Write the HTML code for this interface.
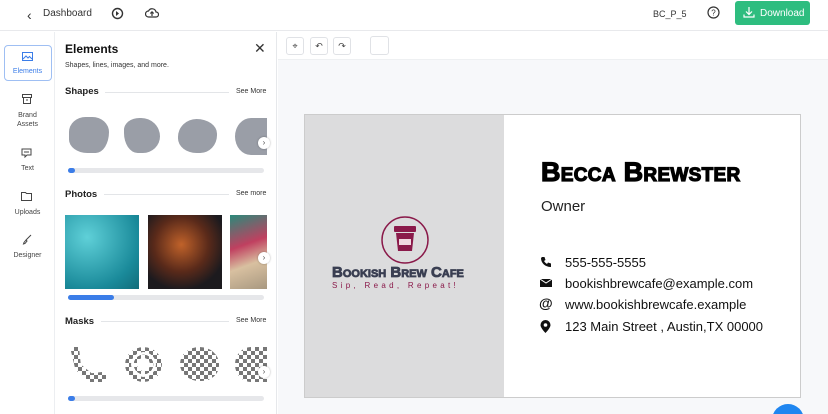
<!DOCTYPE html>
<html><head><meta charset="utf-8">
<style>
*{margin:0;padding:0;box-sizing:border-box}
html,body{width:828px;height:414px;overflow:hidden}
body{font-family:"Liberation Sans",sans-serif;background:#fff;position:relative;color:#222}
.abs{position:absolute}
.top{left:0;top:0;width:828px;height:31px;border-bottom:1px solid #e8e9ec;background:#fff}
.rail{left:0;top:32px;width:55px;height:382px;border-right:1px solid #eceef1;background:#fff}
.ri{position:absolute;left:0;width:55px;text-align:center;font-size:7px;color:#444;line-height:9px}
.panel{left:56px;top:32px;width:221px;height:382px;border-right:1px solid #e6e8eb;background:#fff}
.canvas{left:278px;top:32px;width:550px;height:382px;background:#f7f8fa}
.tb{left:278px;top:32px;width:550px;height:28px;background:#fff;border-bottom:1px solid #eef0f2}
.tbtn{position:absolute;top:5px;width:18px;height:18px;border:1px solid #e0e2e6;border-radius:3px;background:#fff;font-size:9px;text-align:center;line-height:16px;color:#444}
.sec{position:absolute;left:65px;font-size:9.5px;font-weight:bold;color:#222}
.line{position:absolute;height:1px;background:#e3e5e8}
.more{position:absolute;left:236px;font-size:7px;color:#333}
.bar{position:absolute;left:68px;width:196px;height:5px;border-radius:3px;background:#e6e7ea}
.bar i{display:block;height:5px;border-radius:3px;background:#3b7de8}
.blob{position:absolute;background:#9a9ea7}
.arrow{position:absolute;width:12px;height:12px;border-radius:6px;background:#fff;box-shadow:0 0 2px rgba(0,0,0,.3);font-size:8px;text-align:center;line-height:12px;color:#555}
.chk{position:absolute;background-color:#fff;background-image:linear-gradient(45deg,#777 25%,transparent 25%,transparent 75%,#777 75%),linear-gradient(45deg,#777 25%,transparent 25%,transparent 75%,#777 75%);background-size:8px 8px;background-position:0 0,4px 4px}
.card{left:304px;top:114px;width:497px;height:284px;background:#fff;border:1px solid #ccc}
.ct{position:absolute;left:565px;font-size:13px;color:#111}
.ic{position:absolute;left:540px}
</style></head><body>
<div class="abs top">
 <div class="abs" style="left:27px;top:7px;font-size:14px;line-height:16px;color:#333">&#8249;</div>
 <div class="abs" style="left:43px;top:8px;font-size:10px;line-height:12px;color:#333">Dashboard</div>
 <svg class="abs" style="left:111px;top:7px" width="13" height="13" viewBox="0 0 13 13"><circle cx="6.5" cy="6.5" r="5" fill="none" stroke="#333" stroke-width="1.4"/><path d="M5 4l3 2.5-3 2.5z" fill="#333"/></svg>
 <svg class="abs" style="left:145px;top:7px" width="14" height="12" viewBox="0 0 14 12"><path d="M3.5 10h7.5a2.5 2.5 0 0 0 0-5 4 4 0 0 0-7.5-1A3 3 0 0 0 3.5 10z" fill="none" stroke="#333" stroke-width="1.2"/><path d="M7 9V5M5.3 6.5L7 4.8l1.7 1.7" stroke="#333" fill="none" stroke-width="1.2"/></svg>
 <div class="abs" style="left:653px;top:9px;font-size:9px;line-height:11px;color:#333">BC_P_5</div>
 <svg class="abs" style="left:707px;top:6px" width="13" height="13" viewBox="0 0 13 13"><circle cx="6.5" cy="6.5" r="5.5" fill="none" stroke="#333" stroke-width="1.2"/><text x="6.5" y="9.5" font-size="8" text-anchor="middle" fill="#333" font-family="Liberation Sans">?</text></svg>
 <div class="abs" style="left:735px;top:1px;width:75px;height:24px;background:#2ebd7f;border-radius:3px"></div>
 <div class="abs" style="left:760px;top:8px;font-size:10px;line-height:12px;color:#fff">Download</div>
 <svg class="abs" style="left:743px;top:6px" width="12" height="12" viewBox="0 0 12 12"><path d="M6 1v7M3 5.5L6 8.5 9 5.5M1 8.5v2.5h10V8.5" stroke="#fff" fill="none" stroke-width="1.2"/></svg>
</div>
<div class="abs rail">
 <div class="abs" style="left:4px;top:13px;width:48px;height:36px;border:1px solid #9fbff3;border-radius:4px"></div>
 <svg class="abs" style="left:22px;top:20px" width="11" height="9" viewBox="0 0 11 9"><rect x=".5" y=".5" width="10" height="8" fill="none" stroke="#3b7de8"/><path d="M1 7l3-3 2 2 1.5-1.5L10 7" stroke="#3b7de8" fill="none"/></svg>
 <div class="ri" style="top:35px;color:#3b7de8">Elements</div>
 <svg class="abs" style="left:22px;top:62px" width="10" height="10" viewBox="0 0 10 10"><rect x=".5" y=".5" width="9" height="3" fill="none" stroke="#444"/><path d="M1.5 3.5v6h7v-6M4 6h2" stroke="#444" fill="none"/></svg>
 <div class="ri" style="top:79px">Brand<br>Assets</div>
 <svg class="abs" style="left:21px;top:116px" width="11" height="10" viewBox="0 0 11 10"><path d="M1 1h9v6H6L4 9V7H1z" fill="none" stroke="#444"/><path d="M3 4h5" stroke="#444"/></svg>
 <div class="ri" style="top:132px">Text</div>
 <svg class="abs" style="left:21px;top:159px" width="11" height="10" viewBox="0 0 11 10"><path d="M.5 1.5h4l1 1h5v7H.5z" fill="none" stroke="#444"/></svg>
 <div class="ri" style="top:176px">Uploads</div>
 <svg class="abs" style="left:22px;top:202px" width="10" height="11" viewBox="0 0 10 11"><path d="M9 1L4 6M4 6L2 8.5 1.5 10 3 9.5 5 7z" stroke="#444" fill="none"/></svg>
 <div class="ri" style="top:219px">Designer</div>
</div>
<div class="abs panel"></div>
<div class="abs" style="left:65px;top:42px;font-size:12px;font-weight:bold;color:#111">Elements</div>
<div class="abs" style="left:254px;top:40px;font-size:14px;color:#333">&#10005;</div>
<div class="abs" style="left:65px;top:62px;font-size:7px;color:#333">Shapes, lines, images, and more.</div>
<div class="sec" style="top:86px">Shapes</div><div class="line" style="left:105px;width:124px;top:92px"></div><div class="more abs" style="top:88px">See More</div>
<div class="blob" style="left:69px;top:117px;width:40px;height:36px;border-radius:50% 50% 40% 55%/50% 50% 70% 45%"></div>
<div class="blob" style="left:124px;top:118px;width:36px;height:35px;border-radius:45% 55% 50% 40%/35% 55% 50% 60%"></div>
<div class="blob" style="left:178px;top:119px;width:39px;height:34px;border-radius:50% 55% 45% 50%/55% 45% 55% 45%"></div>
<div class="blob" style="left:235px;top:118px;width:32px;height:37px;border-radius:50% 0 0 50%"></div>
<div class="arrow" style="left:258px;top:137px">&#8250;</div>
<div class="bar" style="top:168px"><i style="width:7px"></i></div>
<div class="sec" style="top:189px">Photos</div><div class="line" style="left:104px;width:125px;top:194px"></div><div class="more abs" style="top:190px">See more</div>
<div class="abs" style="left:65px;top:215px;width:74px;height:74px;background:radial-gradient(circle at 30% 30%,#5fd0d8,#1a8a9a 70%,#126c7a)"></div>
<div class="abs" style="left:148px;top:215px;width:74px;height:74px;background:radial-gradient(circle at 45% 40%,#c0622a,#5a2a1a 45%,#1c1a1e 75%)"></div>
<div class="abs" style="left:230px;top:215px;width:37px;height:74px;background:linear-gradient(160deg,#2a8a7a,#c04060 40%,#d8c0a0 65%,#a89880)"></div>
<div class="arrow" style="left:258px;top:252px">&#8250;</div>
<div class="bar" style="top:295px"><i style="width:46px"></i></div>
<div class="sec" style="top:316px">Masks</div><div class="line" style="left:101px;width:128px;top:321px"></div><div class="more abs" style="top:317px">See More</div>
<div class="chk" style="left:70px;top:347px;width:36px;height:35px;clip-path:polygon(0 0,25% 0,30% 50%,60% 75%,100% 70%,100% 100%,55% 100%,15% 65%)"></div>
<div class="chk" style="left:125px;top:347px;width:37px;height:35px;border-radius:50%;-webkit-mask:radial-gradient(circle,transparent 25%,#000 26%,#000 38%,transparent 39%,transparent 48%,#000 49%)"></div>
<div class="chk" style="left:180px;top:347px;width:39px;height:34px;border-radius:50% 50% 45% 50%"></div>
<div class="chk" style="left:235px;top:347px;width:32px;height:35px;border-radius:50% 0 0 50%"></div>
<div class="arrow" style="left:258px;top:366px">&#8250;</div>
<div class="bar" style="top:396px"><i style="width:7px"></i></div>

<div class="abs canvas"></div>
<div class="abs tb">
 <div class="tbtn" style="left:8px">&#8982;</div>
 <div class="tbtn" style="left:32px">&#8630;</div>
 <div class="tbtn" style="left:55px">&#8631;</div>
 <div class="tbtn" style="left:92px;width:19px;height:19px;top:4px"></div>
</div>
<div class="abs card"></div>
<div class="abs" style="left:305px;top:115px;width:199px;height:282px;background:#dcdcdd"></div>
<svg class="abs" style="left:380px;top:215px" width="50" height="50" viewBox="0 0 50 50"><circle cx="25" cy="25" r="23" fill="none" stroke="#8a1a4a" stroke-width="1.5"/><rect x="14" y="11" width="22" height="6" rx="1" fill="#8a1a4a"/><path d="M16 18h18l-2 18H18z" fill="#8a1a4a"/><rect x="19" y="24" width="12" height="6" fill="#f0d8e0"/></svg>
<div class="abs" style="left:332px;top:264px;font-size:15px;line-height:17px;font-weight:900;color:#3a3f52;font-variant:small-caps;-webkit-text-stroke:0.8px #3a3f52;white-space:nowrap">Bookish Brew Cafe</div>
<div class="abs" style="left:332px;top:281px;font-size:8px;color:#8a1a4a;letter-spacing:3.3px">Sip, Read, Repeat!</div>
<div class="abs" style="left:541px;top:157px;font-size:27px;line-height:30px;font-weight:900;color:#000;font-variant:small-caps;-webkit-text-stroke:1.2px #000;white-space:nowrap;letter-spacing:0.3px">Becca Brewster</div>
<div class="abs" style="left:541px;top:198px;font-size:15px;color:#222">Owner</div>
<svg class="ic" style="top:256px" width="12" height="12" viewBox="0 0 12 12"><path d="M2 1l2.5 0 1 3-1.5 1a7 7 0 0 0 3 3l1-1.5 3 1V11C5 11 1 7 1 2z" fill="#111"/></svg>
<div class="ct" style="top:255px">555-555-5555</div>
<svg class="ic" style="top:278px" width="12" height="10" viewBox="0 0 12 10"><path d="M0 1h12v8H0z" fill="#111"/><path d="M0 1l6 4 6-4" stroke="#fff" fill="none"/></svg>
<div class="ct" style="top:276px">bookishbrewcafe@example.com</div>
<div class="abs" style="left:539px;top:295px;font-size:14px;font-weight:bold;color:#111">@</div>
<div class="ct" style="top:297px">www.bookishbrewcafe.example</div>
<svg class="ic" style="top:320px" width="11" height="13" viewBox="0 0 11 13"><path d="M5.5 0a5 5 0 0 1 5 5c0 3-5 8-5 8S.5 8 .5 5a5 5 0 0 1 5-5z" fill="#111"/><circle cx="5.5" cy="5" r="1.8" fill="#fff"/></svg>
<div class="ct" style="top:319px">123 Main Street , Austin,TX 00000</div>
<div class="abs" style="left:772px;top:404px;width:32px;height:10px;overflow:hidden"><div style="width:32px;height:32px;border-radius:16px;background:#1f86f0"></div></div>
</body></html>
